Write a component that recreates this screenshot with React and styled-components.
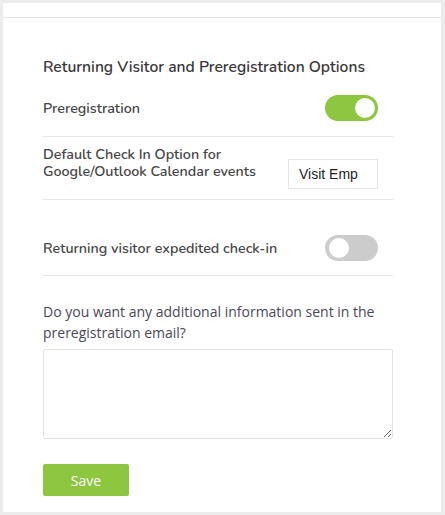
import React from "react";
import styled, { createGlobalStyle } from "styled-components";

const Global = createGlobalStyle`
  html, body { margin: 0; padding: 0; background: #ebebeb; }
  * { box-sizing: border-box; }
`;

const Page = styled.div`
  width: 445px;
  height: 515px;
  padding: 3px 4px 3px 3px;
`;

const Card = styled.div`
  background: #fff;
  height: 100%;
  display: flex;
  flex-direction: column;
`;

const TopStrip = styled.div`
  height: 15px;
  border-bottom: 1px solid #e6e6e6;
`;

const Body = styled.div`
  padding: 39px 48px 0 40px;
  display: flex;
  flex-direction: column;
`;

const Heading = styled.h3`
  margin: 0 0 3px;
  font-family: "Nunito", "Lato", "Open Sans", sans-serif;
  font-weight: 600;
  font-size: 15.6px;
  line-height: 20px;
  color: #383838;
`;

const Row = styled.div`
  display: flex;
  justify-content: space-between;
  align-items: ${(p) => p.$align || "center"};
  padding: ${(p) => p.$pad || "15px 15px 15px 0"};
  border-bottom: 1px solid #e6e6e6;
`;

const Label = styled.div`
  font-family: "Nunito", "Lato", "Open Sans", sans-serif;
  font-weight: 600;
  font-size: 14.3px;
  line-height: 17px;
  color: #464646;
`;

const Track = styled.div`
  position: relative;
  width: 53px;
  height: 26px;
  border-radius: 13px;
  background: ${(p) => (p.$on ? "#8dc63f" : "#cccccc")};
  flex-shrink: 0;
`;

const Knob = styled.span`
  position: absolute;
  top: 3px;
  left: ${(p) => (p.$on ? "30px" : "4px")};
  width: 20px;
  height: 20px;
  border-radius: 50%;
  background: #fff;
`;

const Toggle = ({ on }) => (
  <Track $on={on}>
    <Knob $on={on} />
  </Track>
);

const SelectBox = styled.div`
  width: 90px;
  height: 30px;
  margin-top: 13px;
  border: 1px solid #e6e6e6;
  padding: 0 10px;
  display: flex;
  align-items: center;
  font-family: "Liberation Sans", Arial, sans-serif;
  font-size: 14px;
  color: #1f1f1f;
`;

const Question = styled.p`
  margin: 25px 0 6px;
  font-family: "Open Sans", "Noto Sans", sans-serif;
  font-size: 14px;
  line-height: 21px;
  color: #4a4858;
`;

const TextArea = styled.textarea`
  display: block;
  width: 350px;
  height: 90px;
  border: 1px solid #e3e3e3;
  border-radius: 2px;
  resize: both;
  outline: none;
  font-family: "Open Sans", sans-serif;
`;

const SaveButton = styled.button`
  margin-top: 25px;
  width: 86px;
  height: 32px;
  border: none;
  border-radius: 2px;
  background: #8dc63f;
  color: #fff;
  font-family: "Open Sans", "Noto Sans", sans-serif;
  font-size: 14px;
  cursor: pointer;
`;

export default function App() {
  return (
    <>
      <Global />
      <Page>
        <Card>
          <TopStrip />
          <Body>
            <Heading>Returning Visitor and Preregistration Options</Heading>
            <Row>
              <Label>Preregistration</Label>
              <Toggle on />
            </Row>
            <Row $align="flex-start" $pad="9px 15px 10px 0">
              <Label>
                Default Check In Option for
                <br />
                Google/Outlook Calendar events
              </Label>
              <SelectBox>Visit Emp</SelectBox>
            </Row>
            <Row $pad="35px 15px 14px 0">
              <Label>Returning visitor expedited check-in</Label>
              <Toggle />
            </Row>
            <Question>
              Do you want any additional information sent in the preregistration email?
            </Question>
            <TextArea />
            <div>
              <SaveButton>Save</SaveButton>
            </div>
          </Body>
        </Card>
      </Page>
    </>
  );
}
